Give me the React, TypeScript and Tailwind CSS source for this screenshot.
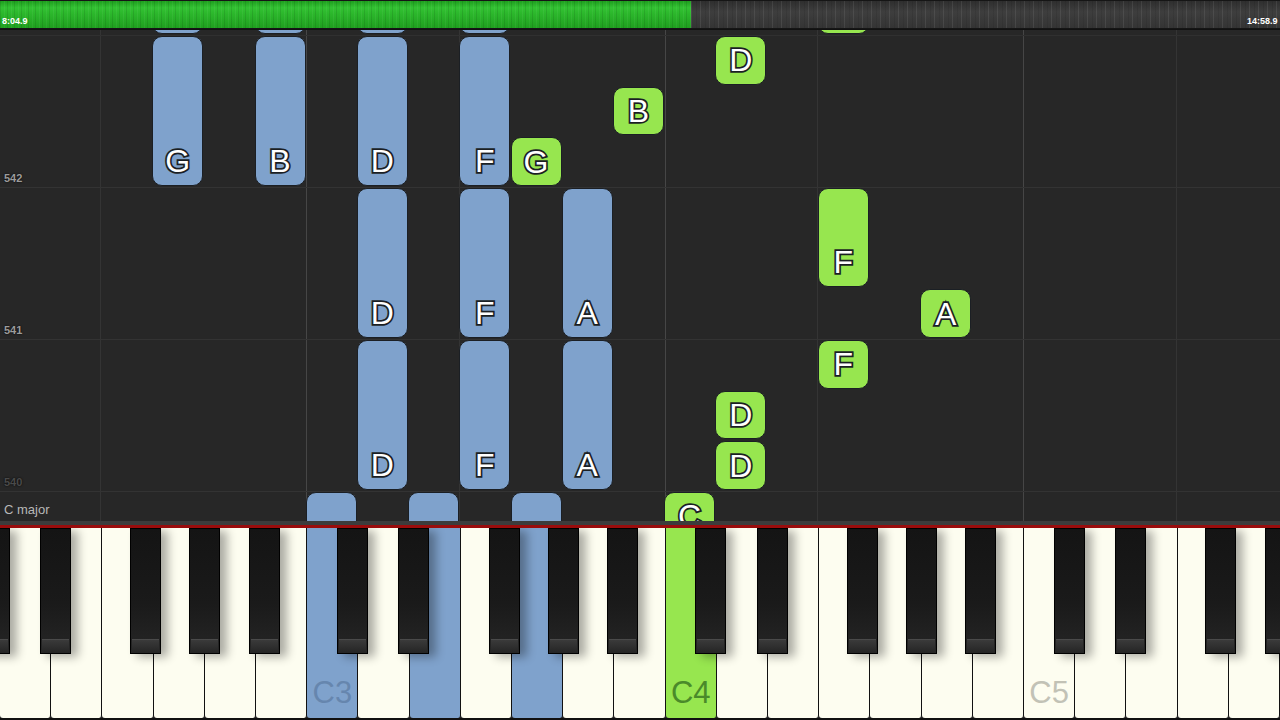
import React from "react"

const KEY_W = 51.2
const BEAT = 50.667
const names = ["C", "D", "E", "F", "G", "A", "B"]
// white key index 0 is D2
const noteName = (i: number) => names[(((i + 1) % 7) + 7) % 7]
const blackOffset: Record<string, number> = { C: -6, D: 4, F: -8, G: 0, A: 8 }

type Note = { col: number; from: number; to: number; green?: boolean }

// from/to are beat indexes counted upward from the line at 540
const notes: Note[] = [
  { col: 3, from: 6, to: 8 },
  { col: 3, from: 9, to: 11 },
  { col: 5, from: 6, to: 8 },
  { col: 5, from: 9, to: 11 },
  { col: 7, from: 0, to: 2 },
  { col: 7, from: 3, to: 5 },
  { col: 7, from: 6, to: 8 },
  { col: 7, from: 9, to: 11 },
  { col: 9, from: 0, to: 2 },
  { col: 9, from: 3, to: 5 },
  { col: 9, from: 6, to: 8 },
  { col: 9, from: 9, to: 11 },
  { col: 11, from: 0, to: 2 },
  { col: 11, from: 3, to: 5 },
  { col: 6, from: -3, to: -1 },
  { col: 8, from: -3, to: -1 },
  { col: 10, from: -3, to: -1 },
  { col: 13, from: -1, to: -1, green: true },
  { col: 14, from: 0, to: 0, green: true },
  { col: 14, from: 1, to: 1, green: true },
  { col: 16, from: 2, to: 2, green: true },
  { col: 18, from: 3, to: 3, green: true },
  { col: 16, from: 4, to: 5, green: true },
  { col: 10, from: 6, to: 6, green: true },
  { col: 12, from: 7, to: 7, green: true },
  { col: 14, from: 8, to: 8, green: true },
  { col: 16, from: 9, to: 9, green: true },
]

const lineY = (k: number) => 461 - BEAT * k

const pressed: Record<number, "blue" | "green"> = { 6: "blue", 8: "blue", 10: "blue", 13: "green" }
const keyLabels: Record<number, { text: string; cls: string }> = {
  6: { text: "C3", cls: "text-[#5f7fa6]/80" },
  13: { text: "C4", cls: "text-[#4a8a2a]" },
  20: { text: "C5", cls: "text-[#c2c2b6]" },
}

function NoteBlock({ n }: { n: Note }) {
  const top = lineY(n.to + 1) + 1
  const height = BEAT * (n.to - n.from + 1) - 2
  // label sits 25px above the note's bottom; skip it if that's outside the roll
  const labelY = top + height - 25
  const showLabel = labelY > 0 && labelY < 491
  return (
    <div
      className={`absolute flex flex-col justify-end rounded-[10px] border border-[#1b1f24] ${
        n.green ? "bg-[#97e64f]" : "bg-[#7fa2cc]"
      }`}
      style={{ left: n.col * KEY_W - 1.5, width: 51, top, height }}
    >
      {showLabel && (
        <div className="flex h-[48px] items-center justify-center">
          <span className="font-['Liberation_Sans',Arial,sans-serif] text-[32px] leading-none text-white [-webkit-text-stroke:3.5px_#1b1f24] [paint-order:stroke_fill]">
            {noteName(n.col)}
          </span>
        </div>
      )}
    </div>
  )
}

function TopBar() {
  return (
    <div className="relative h-[30px] shrink-0 border-b border-[#111] bg-[#151515]">
      <div className="absolute inset-x-0 top-[1px] bottom-[1px] flex">
        <div className="w-[691px] bg-[linear-gradient(180deg,#1e9e1e_0%,#33c233_25%,#2cb82c_45%,#1f9f1f_100%)]">
          <div className="h-full w-full bg-[repeating-linear-gradient(90deg,rgba(0,0,0,0.10)_0px,rgba(0,0,0,0.10)_1px,transparent_1px,transparent_4px,rgba(255,255,255,0.05)_4px,rgba(255,255,255,0.05)_5px,transparent_5px,transparent_7px)]" />
        </div>
        <div className="flex-1 bg-[linear-gradient(180deg,#2e2e2e_0%,#3e3e3e_40%,#343434_100%)]">
          <div className="h-full w-full bg-[repeating-linear-gradient(90deg,rgba(255,255,255,0.08)_0px,rgba(255,255,255,0.08)_1px,transparent_1px,transparent_5px,rgba(0,0,0,0.08)_5px,rgba(0,0,0,0.08)_6px,transparent_6px,transparent_9px)]" />
        </div>
      </div>
      <span className="absolute left-[2px] top-[17px] font-['Liberation_Sans',Arial,sans-serif] text-[9px] font-bold leading-none text-white">
        8:04.9
      </span>
      <span className="absolute left-[1247px] top-[17px] whitespace-nowrap font-['Liberation_Sans',Arial,sans-serif] text-[9px] font-bold leading-none text-white">
        14:58.9
      </span>
    </div>
  )
}

function Roll() {
  const cLines = [6, 13, 20]
  const fLines = [2, 9, 16, 23]
  const measures = [
    { k: 0, label: "540", cls: "text-[#4a4a4a]" },
    { k: 3, label: "541", cls: "text-[#9c9c9c]" },
    { k: 6, label: "542", cls: "text-[#9c9c9c]" },
  ]
  return (
    <div className="relative h-[491px] shrink-0 overflow-hidden bg-[#272727]">
      {fLines.map((c) => (
        <div key={`f${c}`} className="absolute top-0 bottom-0 w-px bg-[#343434]" style={{ left: c * KEY_W - 2 }} />
      ))}
      {cLines.map((c) => (
        <div key={`c${c}`} className="absolute top-0 bottom-0 w-px bg-[#464646]" style={{ left: c * KEY_W - 1 }} />
      ))}
      <div className="absolute inset-x-0 h-px bg-[#303030]" style={{ top: lineY(9) }} />
      {measures.map((m) => (
        <React.Fragment key={m.label}>
          <div className="absolute inset-x-0 h-px bg-[#333333]" style={{ top: lineY(m.k) }} />
          <span
            className={`absolute left-[4px] font-['Liberation_Sans',Arial,sans-serif] text-[11px] font-bold leading-none [text-shadow:0_0_2px_#000] ${m.cls}`}
            style={{ top: lineY(m.k) - 14 }}
          >
            {m.label}
          </span>
        </React.Fragment>
      ))}
      {notes.map((n, i) => (
        <NoteBlock key={i} n={n} />
      ))}
      <span className="absolute left-[4px] top-[473px] font-['Liberation_Sans',Arial,sans-serif] text-[13px] leading-none text-[#b8b8b8]">
        C major
      </span>
    </div>
  )
}

function Keyboard() {
  const whites = Array.from({ length: 25 }, (_, i) => i)
  const blacks: number[] = []
  for (let i = -1; i < 25; i++) {
    const n = noteName(i)
    if (n in blackOffset) blacks.push(i)
  }
  return (
    <div className="flex shrink-0 flex-col">
      <div className="h-[4px] bg-[#3c3c3c]" />
      <div className="h-[3px] bg-[#9a0c0c]" />
      <div className="relative h-[190px] overflow-hidden">
        <div className="flex h-full">
          {whites.map((i) => {
            const p = pressed[i]
            const lab = keyLabels[i]
            return (
              <div
                key={i}
                className={`flex flex-1 items-end justify-center rounded-b-[3px] border-r border-[#111] pb-[10px] ${
                  p === "blue" ? "bg-[#7fa2cc]" : p === "green" ? "bg-[#97e64f]" : "bg-[#fdfdf0]"
                }`}
              >
                {lab && (
                  <span className={`font-['Liberation_Sans',Arial,sans-serif] text-[31px] leading-none ${lab.cls}`}>
                    {lab.text}
                  </span>
                )}
              </div>
            )
          })}
        </div>
        {blacks.map((i) => {
          const left = (i + 1) * KEY_W + blackOffset[noteName(i)] - 15.5
          return (
            <div
              key={`b${i}`}
              className="absolute top-0 flex h-[126px] w-[31px] flex-col justify-end border border-black bg-[linear-gradient(180deg,#141414_0%,#1a1a1a_60%,#262626_100%)] shadow-[7px_3px_9px_rgba(0,0,0,0.32)]"
              style={{ left }}
            >
              <div className="mx-[1px] mb-[1px] h-[13px] border-t border-[#4a4a4a] bg-[linear-gradient(180deg,#3a3a3a,#262626)]" />
            </div>
          )
        })}
      </div>
      <div className="h-[2px] bg-[#111]" />
    </div>
  )
}

export default function App() {
  return (
    <div className="flex h-[720px] w-[1280px] flex-col overflow-hidden bg-[#272727]">
      <TopBar />
      <Roll />
      <Keyboard />
    </div>
  )
}
